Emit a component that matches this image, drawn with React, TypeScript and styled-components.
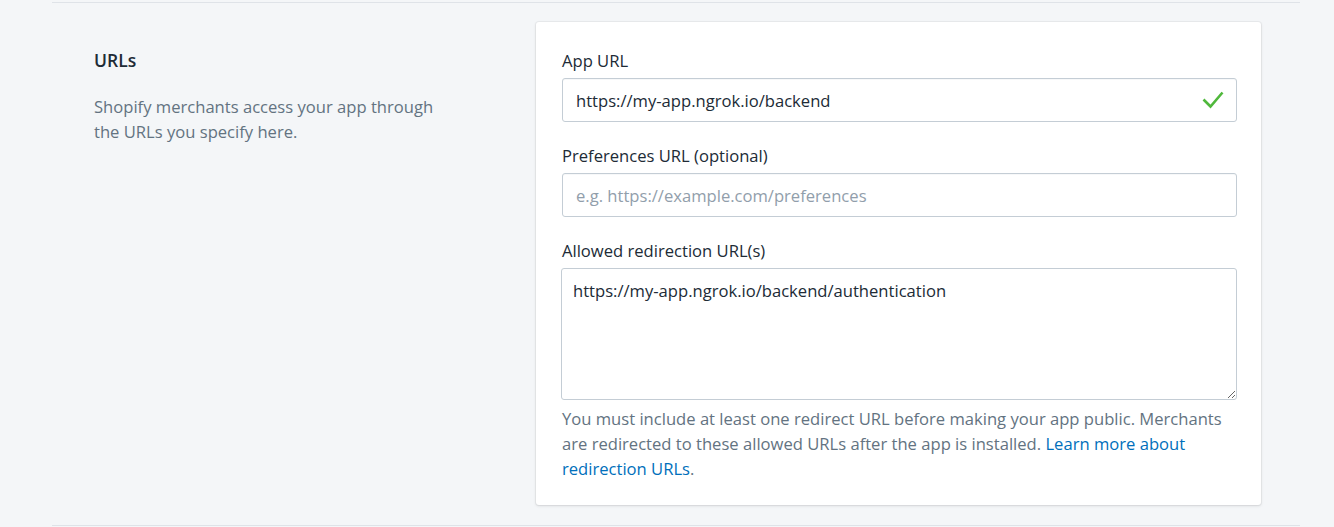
import styled, { createGlobalStyle } from "styled-components";

const GlobalStyle = createGlobalStyle`
  html, body {
    margin: 0;
    padding: 0;
    background: #f4f6f8;
  }
  body {
    font-family: "Open Sans", "Noto Sans", sans-serif;
    color: #212b36;
    -webkit-font-smoothing: antialiased;
  }
`;

export default function App() {
  return (
    <>
      <GlobalStyle />
      <Page>
        <Section>
          <Annotation>
            <SectionTitle>URLs</SectionTitle>
            <Description>
              Shopify merchants access your app through the URLs you specify here.
            </Description>
          </Annotation>

          <Card>
            <Field>
              <Label htmlFor="app-url">App URL</Label>
              <InputWrap>
                <Input id="app-url" defaultValue="https://my-app.ngrok.io/backend" />
                <Check width="22" height="18" viewBox="0 0 22 18" aria-hidden>
                  <polyline
                    points="1.5,8.5 8.5,15.5 20.5,1.5"
                    fill="none"
                    stroke="#50b83c"
                    strokeWidth="2.6"
                  />
                </Check>
              </InputWrap>
            </Field>

            <Field>
              <Label htmlFor="pref-url">Preferences URL (optional)</Label>
              <Input id="pref-url" placeholder="e.g. https://example.com/preferences" />
            </Field>

            <Field>
              <Label htmlFor="redirect-urls">Allowed redirection URL(s)</Label>
              <TextArea
                id="redirect-urls"
                spellCheck
                defaultValue="https://my-app.ngrok.io/backend/authentication"
              />
              <HelpText>
                You must include at least one redirect URL before making your app public.
                Merchants are redirected to these allowed URLs after the app is installed.{" "}
                <Link href="#">Learn more about redirection URLs</Link>.
              </HelpText>
            </Field>
          </Card>
        </Section>
      </Page>
    </>
  );
}

const Page = styled.div`
  padding-top: 2px;
  margin-left: 52px;
  width: 1248px;
`;

const Section = styled.section`
  display: flex;
  border-top: 1px solid #dfe3e8;
  border-bottom: 1px solid #dfe3e8;
  padding: 19px 39px 20px 42px;
`;

const Annotation = styled.div`
  flex: 0 0 442px;
  padding-top: 26px;
`;

const SectionTitle = styled.h2`
  margin: 0 0 22px;
  font-size: 17.5px;
  font-weight: 600;
  line-height: 24px;
  color: #212b36;
`;

const Description = styled.p`
  margin: 0;
  max-width: 350px;
  font-size: 16.6px;
  line-height: 25px;
  color: #637381;
`;

const Card = styled.div`
  flex: 1;
  background: #fff;
  border-radius: 3px;
  box-shadow: 0 0 0 1px rgba(63, 63, 68, 0.05), 0 1px 3px 0 rgba(63, 63, 68, 0.15);
  padding: 27px 24px 24px 26px;
  display: flex;
  flex-direction: column;
  gap: 22px;
`;

const Field = styled.div`
  display: flex;
  flex-direction: column;
`;

const Label = styled.label`
  font-size: 16.6px;
  line-height: 24px;
  margin-bottom: 5px;
  color: #212b36;
`;

const InputWrap = styled.div`
  position: relative;
`;

const Input = styled.input`
  box-sizing: border-box;
  width: 100%;
  height: 44px;
  padding: 0 40px 0 13px;
  font-family: inherit;
  font-size: 16.6px;
  color: #212b36;
  background: #fff;
  border: 1px solid #c4cdd5;
  border-radius: 3px;
  box-shadow: inset 0 1px 0 0 rgba(99, 115, 129, 0.05);
  outline: none;
  &::placeholder {
    color: #919eab;
  }
`;

const Check = styled.svg`
  position: absolute;
  right: 13px;
  top: 13px;
`;

const TextArea = styled.textarea`
  box-sizing: border-box;
  width: calc(100% + 1px);
  margin-left: -1px;
  height: 132px;
  padding: 10px 11px;
  font-family: inherit;
  font-size: 16.6px;
  line-height: 24px;
  color: #212b36;
  background: #fff;
  border: 1px solid #c4cdd5;
  border-radius: 3px;
  outline: none;
  resize: vertical;
`;

const HelpText = styled.p`
  margin: 6px 0 0;
  font-size: 16.6px;
  line-height: 25px;
  color: #637381;
`;

const Link = styled.a`
  color: #006fbb;
  text-decoration: none;
`;
